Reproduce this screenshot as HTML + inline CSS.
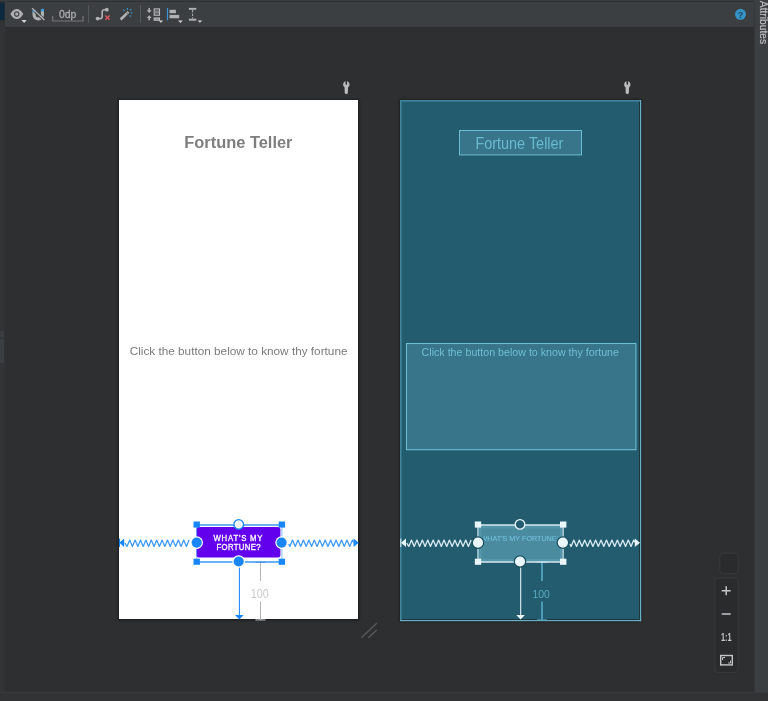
<!DOCTYPE html>
<html><head><meta charset="utf-8"><title>Layout Editor</title>
<style>
html,body{margin:0;padding:0;background:#2d2f31;}
body{width:768px;height:701px;overflow:hidden;position:relative;font-family:"Liberation Sans",sans-serif;}
svg{position:absolute;left:0;top:0;display:block;}
text{font-family:"Liberation Sans",sans-serif;}
svg{will-change:transform;}
</style></head><body>
<svg width="768" height="701" viewBox="0 0 768 701">
<defs>
<filter id="sh" x="-5%" y="-5%" width="110%" height="110%" color-interpolation-filters="sRGB"><feGaussianBlur stdDeviation="1.2"/></filter>
<clipPath id="btnclip"><rect x="483.6" y="530" width="74.6" height="20"/></clipPath>
</defs>
<!-- chrome -->
<rect x="0" y="0" width="768" height="701" fill="#2d2f31"/>
<rect x="0" y="0" width="5" height="701" fill="#313335"/>
<rect x="0" y="331" width="4" height="6.5" fill="#3b3e40"/>
<rect x="0" y="339" width="4" height="24" fill="#3b3e40"/>
<rect x="0" y="0" width="768" height="2" fill="#3a3d3f"/>
<rect x="0" y="1.3" width="768" height="0.9" fill="#2b2d2e"/>
<rect x="5" y="2" width="749" height="25" fill="#3c3f41"/>
<rect x="5" y="26.5" width="749" height="0.8" fill="#35373a"/>
<rect x="0" y="2.6" width="4.5" height="17.6" fill="#0d293e"/>
<rect x="754" y="0" width="14" height="692" fill="#3c3f41"/>
<rect x="754" y="2" width="1" height="690" fill="#343638"/>
<rect x="0" y="692" width="768" height="9" fill="#313335"/>
<rect x="0" y="692" width="768" height="1" fill="#37393b"/>

<!-- toolbar icons -->
<g id="tb">
<!-- eye -->
<path d="M10.3 14 C12.4 10.4 14.6 8.9 16.8 8.9 C19 8.9 21.2 10.4 23.3 14 C21.2 17.6 19 19.1 16.8 19.1 C14.6 19.1 12.4 17.6 10.3 14 Z" fill="#afb1b3"/>
<circle cx="16.7" cy="14.1" r="2.8" fill="#4b4e50"/>
<circle cx="16.7" cy="14.1" r="1.5" fill="#afb1b3"/>
<path d="M21.4 20 L26.8 20 L24.1 23 Z" fill="#d0d2d4"/>
<!-- magnet -->
<path d="M32.5 9.8 L32.5 14.7 A5.75 5.75 0 0 0 44 14.7 L44 9 L40.9 9 L40.9 14.7 A2.6 2.6 0 0 1 35.7 14.7 L35.7 9.8 Z" fill="#afb1b3"/>
<rect x="41" y="8.8" width="2.9" height="2.6" fill="#3a97d4"/>
<rect x="32.6" y="9.8" width="2.9" height="2" fill="#3a97d4"/>
<line x1="31.4" y1="8.9" x2="43.7" y2="20.7" stroke="#3c3f41" stroke-width="1.3"/>
<line x1="32.8" y1="7.5" x2="45" y2="19.2" stroke="#3c3f41" stroke-width="1"/>
<rect x="32.6" y="9.9" width="2.4" height="1.8" fill="#3a97d4"/>
<line x1="32" y1="8.1" x2="44.4" y2="20" stroke="#b4b6b8" stroke-width="1.25"/>
<!-- margin 0dp -->
<path d="M52.7 16 L52.7 21 L83 21 L83 16" fill="none" stroke="#747678" stroke-width="1.2"/>
<text x="67.6" y="17.6" font-size="11" text-anchor="middle" fill="#a9abad" stroke="#a9abad" stroke-width="0.3" textLength="17.4" lengthAdjust="spacingAndGlyphs">0dp</text>
<rect x="88" y="5.3" width="1" height="17.5" fill="#55575a"/>
<!-- clear constraints -->
<path d="M97.5 18.6 L100.2 18.6 Q102.2 18.6 102.2 16.4 L102.2 11.8 Q102.2 9.7 104.4 9.7 L106.7 9.7" fill="none" stroke="#afb1b3" stroke-width="1.6"/>
<circle cx="97.6" cy="18.6" r="1.9" fill="#afb1b3"/>
<circle cx="106.8" cy="9.7" r="1.9" fill="#afb1b3"/>
<path d="M105.4 15.6 L109.6 19.8 M109.6 15.6 L105.4 19.8" stroke="#d9565f" stroke-width="1.45" fill="none"/>
<!-- wand -->
<path d="M119.7 18.6 L127.6 11 L129.4 12.8 L121.5 20.4 Z" fill="#afb1b3"/>
<path d="M126 12.6 L126.7 11.9 L128.5 13.7 L127.8 14.4 Z" fill="#77797b"/>
<g stroke="#3a97d4" stroke-width="1.2">
<line x1="123.2" y1="9.6" x2="124.4" y2="10.9"/>
<line x1="127.4" y1="8" x2="127.4" y2="9.8"/>
<line x1="131.2" y1="9.2" x2="130" y2="10.3"/>
<line x1="130.8" y1="12.9" x2="132.4" y2="12.9"/>
<line x1="129.6" y1="15.4" x2="130.8" y2="16.6"/>
</g>
<rect x="140" y="5.3" width="1" height="17.5" fill="#55575a"/>
<!-- pack -->
<g fill="#afb1b3">
<rect x="148.4" y="7.9" width="1.6" height="3"/><path d="M146.7 10.2 L151.7 10.2 L149.2 13 Z"/>
<rect x="148.4" y="17.4" width="1.6" height="2.9"/><path d="M146.7 18 L151.7 18 L149.2 15.2 Z"/>
</g>
<rect x="154.2" y="8.9" width="5.3" height="6.3" fill="none" stroke="#bdbfc1" stroke-width="1.1"/>
<rect x="154.8" y="10.4" width="4.1" height="3.3" fill="#808284"/>
<rect x="154.2" y="18" width="5.3" height="2.2" fill="#808284" stroke="#bdbfc1" stroke-width="1.1"/>
<path d="M158.6 20.4 L163.2 20.4 L160.9 22.8 Z" fill="#d0d2d4"/>
<!-- align -->
<rect x="166.9" y="7.9" width="1.2" height="12.4" fill="#3a97d4"/>
<rect x="169.5" y="9.8" width="6.4" height="3.4" fill="#afb1b3"/>
<rect x="169.5" y="14.9" width="9.7" height="3.4" fill="#afb1b3"/>
<path d="M178 20.4 L182.8 20.4 L180.4 22.9 Z" fill="#d0d2d4"/>
<!-- guidelines -->
<rect x="188.9" y="7.9" width="7.4" height="1.9" fill="#afb1b3"/>
<rect x="188.9" y="18.7" width="7.4" height="2" fill="#afb1b3"/>
<line x1="192.6" y1="10" x2="192.6" y2="18.6" stroke="#afb1b3" stroke-width="1" stroke-dasharray="2.4 1.2"/>
<path d="M197.6 20.4 L202.2 20.4 L199.9 22.8 Z" fill="#d0d2d4"/>
</g>
<!-- help -->
<circle cx="740.5" cy="14.3" r="5.5" fill="#3592c4"/>
<text x="740.5" y="17.6" font-size="9" font-weight="bold" text-anchor="middle" fill="#1f4862">?</text>
<!-- side tab label -->
<text transform="translate(759.6 0.8) rotate(90)" font-size="11.4" fill="#bbbdbf" stroke="#bbbdbf" stroke-width="0.2" textLength="43.4" lengthAdjust="spacingAndGlyphs">Attributes</text>

<!-- wrenches -->
<g fill="#b9bbbd">
<path d="M345.5 81 A3.8 3.8 0 0 0 344.6 87.6 L344.7 92.4 A1.6 1.6 0 0 0 347.9 92.4 L348 87.6 A3.8 3.8 0 0 0 347.1 81 L347.1 84 A0.8 0.8 0 0 1 345.5 84 Z"/>
<path d="M626.5 81 A3.8 3.8 0 0 0 625.6 87.6 L625.7 92.4 A1.6 1.6 0 0 0 628.9 92.4 L629 87.6 A3.8 3.8 0 0 0 628.1 81 L628.1 84 A0.8 0.8 0 0 1 626.5 84 Z"/>
</g>

<!-- design surface -->
<rect x="118.2" y="99.6" width="241" height="520.6" fill="#18191b" filter="url(#sh)"/>
<rect x="119" y="100" width="239" height="519" fill="#ffffff"/>
<text x="238.4" y="147.9" font-size="17.4" font-weight="bold" text-anchor="middle" fill="#7e7e7e" textLength="108.2" lengthAdjust="spacingAndGlyphs">Fortune Teller</text>
<text x="238.6" y="354.7" font-size="11.8" text-anchor="middle" fill="#7b7b7b" textLength="217.8" lengthAdjust="spacingAndGlyphs">Click the button below to know thy fortune</text>
<line x1="260.5" y1="562" x2="260.5" y2="581" stroke="#b4b4b4" stroke-width="1"/>
<line x1="260.5" y1="601.5" x2="260.5" y2="620" stroke="#b4b4b4" stroke-width="1"/>
<line x1="255.5" y1="562.3" x2="265.5" y2="562.3" stroke="#b4b4b4" stroke-width="1.2"/>
<line x1="255.5" y1="619.9" x2="265.5" y2="619.9" stroke="#b4b4b4" stroke-width="1.2"/>
<text x="259.8" y="598" font-size="11.9" text-anchor="middle" fill="#c9c9c9" textLength="18" lengthAdjust="spacingAndGlyphs">100</text>
<rect x="196.6" y="527" width="83.8" height="30.5" rx="2.2" fill="#6200ee"/>
<text transform="translate(238 540.8) scale(0.9 1)" font-size="8.6" text-anchor="middle" fill="#f8f3fe" stroke="#f8f3fe" stroke-width="0.4" textLength="54.4" lengthAdjust="spacing">WHAT'S MY</text>
<text transform="translate(238.5 549.9) scale(0.9 1)" font-size="8.6" text-anchor="middle" fill="#f8f3fe" stroke="#f8f3fe" stroke-width="0.4" textLength="48.9" lengthAdjust="spacing">FORTUNE?</text>
<path d="M124.90 543.20 L127.00 546.40 L129.70 540.10 L132.40 546.40 L135.10 540.10 L137.80 546.40 L140.50 540.10 L143.20 546.40 L145.90 540.10 L148.60 546.40 L151.30 540.10 L154.00 546.40 L156.70 540.10 L159.40 546.40 L162.10 540.10 L164.80 546.40 L167.50 540.10 L170.20 546.40 L172.90 540.10 L175.60 546.40 L178.30 540.10 L181.00 546.40 L183.70 540.10 L186.40 546.40 L189.10 540.10" fill="none" stroke="#1886f7" stroke-width="1.25" stroke-linejoin="round" opacity="0.85"/>
<path d="M288.70 544.00 L289.80 546.40 L292.52 540.10 L295.25 546.40 L297.97 540.10 L300.69 546.40 L303.41 540.10 L306.13 546.40 L308.86 540.10 L311.58 546.40 L314.30 540.10 L317.03 546.40 L319.75 540.10 L322.47 546.40 L325.19 540.10 L327.92 546.40 L330.64 540.10 L333.36 546.40 L336.08 540.10 L338.81 546.40 L341.53 540.10 L344.25 546.40 L346.97 540.10 L349.69 546.40 L352.42 540.10 L353.50 542.20" fill="none" stroke="#1886f7" stroke-width="1.25" stroke-linejoin="round" opacity="0.85"/>
<path d="M119.20 542.8 L124.20 538.5 L124.20 547.1 Z" fill="#1886f7"/>
<rect x="119" y="538.6" width="1" height="8.4" fill="#1886f7"/>
<path d="M358.70 542.8 L353.50 538.5 L353.50 547.1 Z" fill="#1886f7"/>
<path d="M197 525 L282 525 M197 562 L282 562" fill="none" stroke="#1886f7" stroke-width="1.3" opacity="0.85"/>
<path d="M196.6 525 L196.6 562 M281.9 525 L281.9 562" fill="none" stroke="#1886f7" stroke-width="1.2" opacity="0.45"/>
<line x1="239.4" y1="562" x2="239.4" y2="616" stroke="#1886f7" stroke-width="1.05"/>
<path d="M235 615 L243.6 615 L239.3 619.6 Z" fill="#1886f7"/>
<rect x="193.5" y="521.5" width="6.4" height="6.1" fill="#1886f7"/>
<rect x="278.7" y="521.5" width="6.4" height="6.1" fill="#1886f7"/>
<rect x="193.5" y="558.7" width="6.4" height="6.1" fill="#1886f7"/>
<rect x="278.7" y="558.7" width="6.4" height="6.1" fill="#1886f7"/>
<circle cx="196.7" cy="542.6" r="6.3" fill="#ffffff"/>
<circle cx="196.7" cy="542.6" r="5.1" fill="#1886f7"/>
<circle cx="281.6" cy="542.6" r="6.3" fill="#ffffff"/>
<circle cx="281.6" cy="542.6" r="5.1" fill="#1886f7"/>
<circle cx="238.7" cy="561.5" r="6.3" fill="#ffffff"/>
<circle cx="238.7" cy="561.5" r="5.1" fill="#1886f7"/>
<circle cx="238.7" cy="524.4" r="4.8" fill="#f8f8f8" stroke="#1886f7" stroke-width="1.3"/>
<!-- resize grip -->
<path d="M361.3 637.7 L376.7 623.2 M368.3 637.7 L376.7 630" stroke="#5b5c5e" stroke-width="1.25" fill="none"/>

<!-- blueprint surface -->
<rect x="399.5" y="99.5" width="242" height="522" fill="#18191b" filter="url(#sh)"/>
<rect x="400" y="100" width="239.5" height="519.5" fill="#225c6e"/>
<rect x="639" y="100" width="1" height="520" fill="#17262c"/>
<rect x="400" y="619" width="240" height="1" fill="#17262c"/>
<rect x="400" y="100" width="1.6" height="520" fill="#42859b"/>
<rect x="400" y="100" width="240" height="1.6" fill="#42859b"/>
<rect x="639.9" y="100" width="1.3" height="521.2" fill="#69afc3"/>
<rect x="400" y="619.9" width="241.2" height="1.3" fill="#69afc3"/>
<rect x="459.5" y="130.5" width="122" height="24.4" fill="#38748a" stroke="#6dbdd3" stroke-width="1"/>
<text x="519.4" y="148.6" font-size="16" text-anchor="middle" fill="#68bace" textLength="88" lengthAdjust="spacingAndGlyphs">Fortune Teller</text>
<rect x="406.5" y="343.5" width="229.4" height="106.2" fill="#38748a" stroke="#6dbdd3" stroke-width="1.1"/>
<text x="520.3" y="355.6" font-size="11.8" text-anchor="middle" fill="#6fbfd3" textLength="197.4" lengthAdjust="spacingAndGlyphs">Click the button below to know thy fortune</text>
<rect x="478" y="525" width="85" height="37" fill="#4a8ba0"/>
<rect x="480.3" y="527.2" width="80.8" height="32.8" fill="none" stroke="#5596ab" stroke-width="2.2"/>
<line x1="542" y1="562" x2="542" y2="581" stroke="#4f9fb8" stroke-width="1.9"/>
<line x1="542" y1="601.5" x2="542" y2="620" stroke="#4f9fb8" stroke-width="1.9"/>
<line x1="537" y1="562.3" x2="547" y2="562.3" stroke="#4f9fb8" stroke-width="1.2"/>
<line x1="537" y1="619.9" x2="547" y2="619.9" stroke="#4f9fb8" stroke-width="1.2"/>
<text x="541.1" y="598" font-size="11.5" text-anchor="middle" fill="#5aaac3" textLength="17.4" lengthAdjust="spacingAndGlyphs">100</text>
<g clip-path="url(#btnclip)"><text x="520.6" y="540.8" font-size="7.8" text-anchor="middle" fill="#74c4e0" stroke="#74c4e0" stroke-width="0.12" opacity="0.9" textLength="80" lengthAdjust="spacingAndGlyphs">WHAT'S MY FORTUNE?</text></g>
<path d="M406.70 543.20 L408.80 546.40 L411.51 540.10 L414.22 546.40 L416.93 540.10 L419.64 546.40 L422.35 540.10 L425.06 546.40 L427.77 540.10 L430.48 546.40 L433.19 540.10 L435.90 546.40 L438.61 540.10 L441.32 546.40 L444.03 540.10 L446.74 546.40 L449.45 540.10 L452.16 546.40 L454.87 540.10 L457.58 546.40 L460.29 540.10 L463.00 546.40 L465.71 540.10 L468.42 546.40 L471.13 540.10" fill="none" stroke="#e9f7fd" stroke-width="1.35" stroke-linejoin="round" opacity="0.9"/>
<path d="M570.00 544.00 L571.10 546.40 L573.82 540.10 L576.55 546.40 L579.27 540.10 L581.99 546.40 L584.71 540.10 L587.44 546.40 L590.16 540.10 L592.88 546.40 L595.60 540.10 L598.33 546.40 L601.05 540.10 L603.77 546.40 L606.49 540.10 L609.22 546.40 L611.94 540.10 L614.66 546.40 L617.38 540.10 L620.11 546.40 L622.83 540.10 L625.55 546.40 L628.27 540.10 L631.00 546.40 L633.72 540.10 L634.80 542.20" fill="none" stroke="#e9f7fd" stroke-width="1.35" stroke-linejoin="round" opacity="0.9"/>
<path d="M401.00 542.8 L406.00 538.5 L406.00 547.1 Z" fill="#e9f7fd"/>
<rect x="400.3" y="538.6" width="1" height="8.4" fill="#e9f7fd"/>
<path d="M640.00 542.8 L634.80 538.5 L634.80 547.1 Z" fill="#e9f7fd"/>
<path d="M478.3 525 L563.3 525 M478.3 562 L563.3 562" fill="none" stroke="#e9f7fd" stroke-width="1.3" opacity="0.9"/>
<path d="M477.9 525 L477.9 562 M563.2 525 L563.2 562" fill="none" stroke="#e9f7fd" stroke-width="1.2" opacity="0.85"/>
<line x1="520.7" y1="562" x2="520.7" y2="616" stroke="#e9f7fd" stroke-width="1.05"/>
<path d="M516.3 615 L524.9 615 L520.6 619.6 Z" fill="#e9f7fd"/>
<rect x="474.8" y="521.5" width="6.4" height="6.1" fill="#e9f7fd"/>
<rect x="560.0" y="521.5" width="6.4" height="6.1" fill="#e9f7fd"/>
<rect x="474.8" y="558.7" width="6.4" height="6.1" fill="#e9f7fd"/>
<rect x="560.0" y="558.7" width="6.4" height="6.1" fill="#e9f7fd"/>
<circle cx="478.0" cy="542.6" r="6.3" fill="#1c4f5f"/>
<circle cx="478.0" cy="542.6" r="5.1" fill="#e9f7fd"/>
<circle cx="562.9" cy="542.6" r="6.3" fill="#1c4f5f"/>
<circle cx="562.9" cy="542.6" r="5.1" fill="#e9f7fd"/>
<circle cx="520.0" cy="561.5" r="6.3" fill="#1c4f5f"/>
<circle cx="520.0" cy="561.5" r="5.1" fill="#e9f7fd"/>
<circle cx="520.0" cy="524.4" r="4.8" fill="#225c6e" stroke="#e9f7fd" stroke-width="1.3"/>

<!-- zoom controls -->
<rect x="719.8" y="553.1" width="18.2" height="20.3" rx="3" fill="#2a2b2c" stroke="#38393b" stroke-width="1"/>
<rect x="715" y="578" width="23" height="94.6" rx="3.5" fill="#2a2b2c" stroke="#38393b" stroke-width="1"/>
<path d="M721.7 590.8 L730.7 590.8 M726.2 586.3 L726.2 595.3" stroke="#c4c6c8" stroke-width="1.5" fill="none"/>
<path d="M721.7 614 L730.7 614" stroke="#c4c6c8" stroke-width="1.5" fill="none"/>
<text x="726.3" y="641" font-size="10.8" font-weight="bold" text-anchor="middle" fill="#c4c6c8" textLength="10.6" lengthAdjust="spacingAndGlyphs">1:1</text>
<rect x="720.7" y="655.5" width="11.6" height="9.4" fill="none" stroke="#c4c6c8" stroke-width="1.4"/>
<path d="M722.6 660 L722.6 657.6 L725 657.6 M730.6 660.6 L730.6 663 L728.2 663" stroke="#c4c6c8" stroke-width="1" fill="none"/>
</svg>
</body></html>
